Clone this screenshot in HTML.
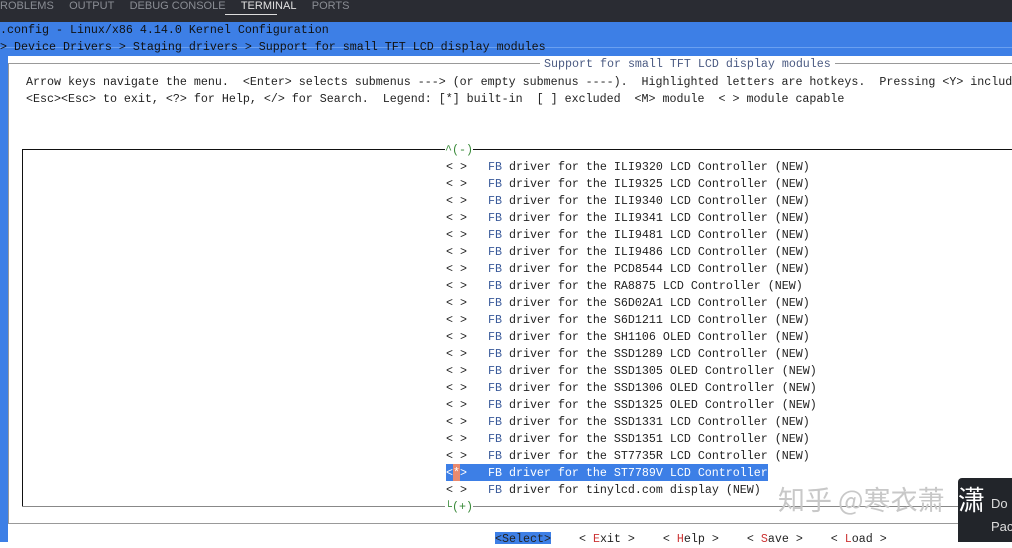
<!DOCTYPE html><html><head><style>
body{margin:0;width:1012px;height:542px;overflow:hidden;background:#fff;font-family:"Liberation Mono",monospace;font-size:11.67px;position:relative}
.a{position:absolute;white-space:pre;line-height:17px;color:#222}
.k{color:#3a5a9a}
</style></head><body>
<div style="position:absolute;left:0;top:0;width:1012px;height:22px;background:#2a2c33"></div>
<div class="a" style="top:0;left:0;height:22px;line-height:12px;font-family:'Liberation Sans',sans-serif;font-size:11px;color:#8a8d94">ROBLEMS&nbsp;&nbsp;&nbsp;&nbsp;&nbsp;OUTPUT&nbsp;&nbsp;&nbsp;&nbsp;&nbsp;DEBUG CONSOLE&nbsp;&nbsp;&nbsp;&nbsp;&nbsp;<span style="color:#e0e0e0">TERMINAL</span>&nbsp;&nbsp;&nbsp;&nbsp;&nbsp;PORTS</div>
<div style="position:absolute;left:225px;top:14px;width:52px;height:1px;background:#ddd"></div>
<div style="position:absolute;left:0;top:22px;width:1012px;height:34px;background:#3d7fe6"></div>
<div style="position:absolute;left:0;top:47px;width:1012px;height:1px;background:#6aa0f0"></div>
<div class="a" style="top:22px;left:0;color:#111">.config - Linux/x86 4.14.0 Kernel Configuration</div>
<div class="a" style="top:39px;left:0;color:#111">&gt; Device Drivers &gt; Staging drivers &gt; Support for small TFT LCD display modules</div>
<div style="position:absolute;left:0;top:56px;width:8px;height:486px;background:#3d7fe6"></div>
<div style="position:absolute;left:8px;top:63px;width:1004px;height:1px;background:#999"></div>
<div style="position:absolute;left:8px;top:63px;width:1px;height:460px;background:#999"></div>
<div style="position:absolute;left:8px;top:523px;width:1004px;height:1px;background:#999"></div>
<div class="a" style="top:56px;left:540px;background:#fff;padding:0 4px;color:#4a5a82">Support for small TFT LCD display modules</div>
<div class="a" style="top:74px;left:26px">Arrow keys navigate the menu.  &lt;Enter&gt; selects submenus ---&gt; (or empty submenus ----).  Highlighted letters are hotkeys.  Pressing &lt;Y&gt; includ</div>
<div class="a" style="top:91px;left:26px">&lt;Esc&gt;&lt;Esc&gt; to exit, &lt;?&gt; for Help, &lt;/&gt; for Search.  Legend: [*] built-in  [ ] excluded  &lt;M&gt; module  &lt; &gt; module capable</div>
<div style="position:absolute;left:22px;top:149px;width:990px;height:1px;background:#111"></div>
<div style="position:absolute;left:22px;top:149px;width:1px;height:357px;background:#111"></div>
<div style="position:absolute;left:22px;top:506px;width:990px;height:1px;background:#888"></div>
<div class="a" style="top:142px;left:445px;background:#fff;color:#3a8a3a">^(-)</div>
<div class="a" style="top:499px;left:445px;background:#fff;color:#3a8a3a">└(+)</div>
<div style="position:absolute;left:446px;top:464px;width:322px;height:17px;background:#3d7fe6"></div>
<div style="position:absolute;left:453px;top:464px;width:7px;height:17px;background:#e88a70"></div>
<div class="a" style="top:159px;left:446px">&lt; &gt;   <span class="k">FB</span> driver for the ILI9320 LCD Controller (NEW)
&lt; &gt;   <span class="k">FB</span> driver for the ILI9325 LCD Controller (NEW)
&lt; &gt;   <span class="k">FB</span> driver for the ILI9340 LCD Controller (NEW)
&lt; &gt;   <span class="k">FB</span> driver for the ILI9341 LCD Controller (NEW)
&lt; &gt;   <span class="k">FB</span> driver for the ILI9481 LCD Controller (NEW)
&lt; &gt;   <span class="k">FB</span> driver for the ILI9486 LCD Controller (NEW)
&lt; &gt;   <span class="k">FB</span> driver for the PCD8544 LCD Controller (NEW)
&lt; &gt;   <span class="k">FB</span> driver for the RA8875 LCD Controller (NEW)
&lt; &gt;   <span class="k">FB</span> driver for the S6D02A1 LCD Controller (NEW)
&lt; &gt;   <span class="k">FB</span> driver for the S6D1211 LCD Controller (NEW)
&lt; &gt;   <span class="k">FB</span> driver for the SH1106 OLED Controller (NEW)
&lt; &gt;   <span class="k">FB</span> driver for the SSD1289 LCD Controller (NEW)
&lt; &gt;   <span class="k">FB</span> driver for the SSD1305 OLED Controller (NEW)
&lt; &gt;   <span class="k">FB</span> driver for the SSD1306 OLED Controller (NEW)
&lt; &gt;   <span class="k">FB</span> driver for the SSD1325 OLED Controller (NEW)
&lt; &gt;   <span class="k">FB</span> driver for the SSD1331 LCD Controller (NEW)
&lt; &gt;   <span class="k">FB</span> driver for the SSD1351 LCD Controller (NEW)
&lt; &gt;   <span class="k">FB</span> driver for the ST7735R LCD Controller (NEW)
<span style="color:#fff">&lt;*&gt;   FB driver for the ST7789V LCD Controller</span>
&lt; &gt;   <span class="k">FB</span> driver for tinylcd.com display (NEW)</div>
<div style="position:absolute;left:495px;top:532px;width:56px;height:12px;background:#3d7fe6"></div>
<div class="a" style="top:531px;left:495px">&lt;Select&gt;    &lt; <span style="color:#c33">E</span>xit &gt;    &lt; <span style="color:#c33">H</span>elp &gt;    &lt; <span style="color:#c33">S</span>ave &gt;    &lt; <span style="color:#c33">L</span>oad &gt;</div>
<div class="a" style="top:482px;left:778px;font-family:'Noto Sans CJK SC',sans-serif;font-size:27px;line-height:34px;color:#c8c8c8">知乎 @寒衣萧</div>
<div style="position:absolute;left:958px;top:478px;width:54px;height:64px;background:#22252a;border-radius:4px 0 0 0"></div>
<div class="a" style="top:495px;left:991px;font-family:'Liberation Sans',sans-serif;font-size:13px;color:#ddd">Do</div>
<div class="a" style="top:518px;left:991px;font-family:'Liberation Sans',sans-serif;font-size:13px;color:#ddd">Pac</div>
<div class="a" style="top:482px;left:958px;font-family:'Noto Sans CJK SC',sans-serif;font-size:27px;line-height:34px;color:#fff">潇</div>
</body></html>
